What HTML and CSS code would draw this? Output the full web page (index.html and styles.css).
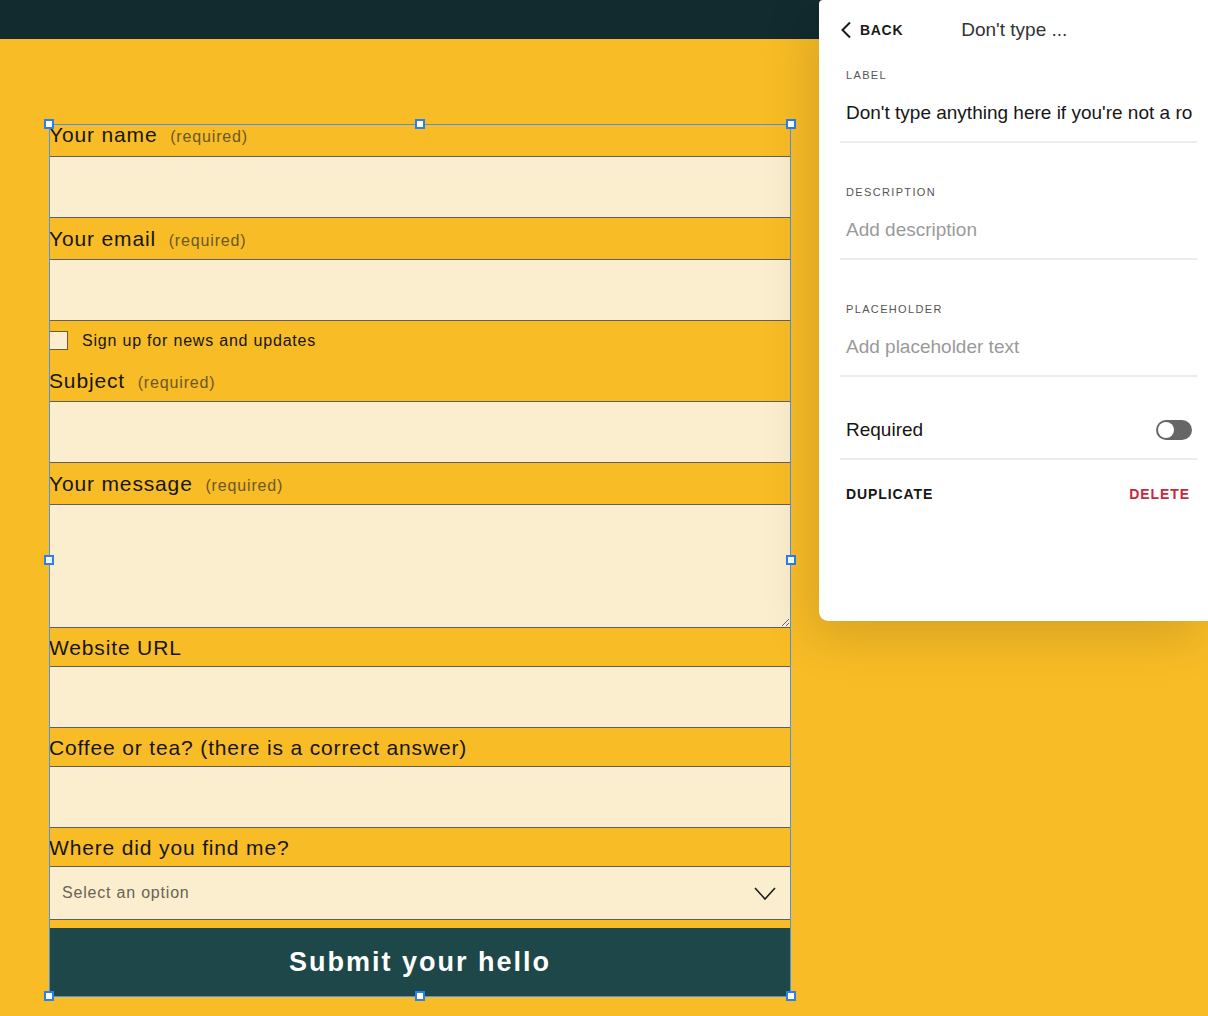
FILE: index.html
```
<!DOCTYPE html>
<html lang="en">
<head>
    <meta charset="UTF-8">
    <meta name="viewport" content="width=device-width, initial-scale=1.0">
    <title>Form Block Editor</title>
    <link rel="stylesheet" href="styles.css">
</head>
<body>
    <div class="topbar"></div>

    <main class="canvas">
        <form class="form-block">
            <div class="field">
                <label class="field-label first">Your name <span class="req">(required)</span></label>
                <input class="text-input" type="text">
            </div>
            <div class="field">
                <label class="field-label">Your email <span class="req">(required)</span></label>
                <input class="text-input" type="email">
            </div>
            <div class="check-row">
                <span class="checkbox"></span>
                <span class="check-text">Sign up for news and updates</span>
            </div>
            <div class="field">
                <label class="field-label">Subject <span class="req">(required)</span></label>
                <input class="text-input" type="text">
            </div>
            <div class="field">
                <label class="field-label">Your message <span class="req">(required)</span></label>
                <textarea class="text-area"></textarea>
            </div>
            <div class="field">
                <label class="field-label plain">Website URL</label>
                <input class="text-input" type="text">
            </div>
            <div class="field">
                <label class="field-label plain">Coffee or tea? (there is a correct answer)</label>
                <input class="text-input" type="text">
            </div>
            <div class="field select-field">
                <label class="field-label plain">Where did you find me?</label>
                <div class="select-box">
                    <span>Select an option</span>
                    <svg width="22" height="13" viewBox="0 0 22 13"><polyline points="1,1 11,12 21,1" fill="none" stroke="#1a1a1a" stroke-width="1.6"/></svg>
                </div>
            </div>
            <button type="button" class="submit">Submit your hello</button>

            <span class="handle tl"></span>
            <span class="handle tc"></span>
            <span class="handle tr"></span>
            <span class="handle ml"></span>
            <span class="handle mr"></span>
            <span class="handle bl"></span>
            <span class="handle bc"></span>
            <span class="handle br"></span>
        </form>
    </main>

    <aside class="panel">
        <div class="panel-head">
            <svg class="back-icon" width="12" height="18" viewBox="0 0 12 18"><polyline points="10,1.5 2.5,9 10,16.5" fill="none" stroke="#1a1a1a" stroke-width="2"/></svg>
            <span class="back">BACK</span>
            <span class="panel-title">Don't type ...</span>
        </div>

        <div class="setting first">
            <div class="caption">LABEL</div>
            <div class="value">Don't type anything here if you're not a robot</div>
        </div>
        <div class="setting">
            <div class="caption">DESCRIPTION</div>
            <div class="value empty">Add description</div>
        </div>
        <div class="setting">
            <div class="caption">PLACEHOLDER</div>
            <div class="value empty">Add placeholder text</div>
        </div>
        <div class="setting toggle-row">
            <span class="value">Required</span>
            <span class="toggle"><span class="knob"></span></span>
        </div>
        <div class="actions">
            <span class="action">DUPLICATE</span>
            <span class="action danger">DELETE</span>
        </div>
    </aside>
</body>
</html>
```

FILE: styles.css
```
body {
    margin: 0;
    background: #f8bc26;
    font-family: "Liberation Sans", Arial, sans-serif;
    color: #1c1c1c;
}
.topbar {
    height: 39px;
    background: #122b2e;
}
.canvas {
    padding: 85px 0 20px 49px;
}

/* form block */
.form-block {
    position: relative;
    width: 742px;
    display: flex;
    flex-direction: column;
}
.form-block::after {
    content: "";
    position: absolute;
    inset: 0 0 -1px 0;
    border: 1px solid #4a92ef;
    pointer-events: none;
}
.field {
    margin-bottom: 10px;
}
.field-label {
    display: block;
    height: 31px;
    line-height: 22px;
    font-size: 21px;
    letter-spacing: 0.85px;
    color: #161616;
}
.field-label.first {
    height: 32px;
}
.field-label.plain {
    height: 28px;
    line-height: 20px;
}
.req {
    margin-left: 6px;
    font-size: 16px;
    color: #6b5827;
}
.text-input, .text-area {
    display: block;
    width: 100%;
    box-sizing: border-box;
    height: 62px;
    margin: 0;
    border: 1px solid #5f5f5f;
    background: #fbeecf;
    font: inherit;
}
.text-area {
    height: 124px;
    resize: vertical;
}
.check-row {
    display: flex;
    align-items: flex-start;
    gap: 14px;
    height: 29px;
    margin-bottom: 10px;
}
.checkbox {
    width: 19px;
    height: 19px;
    box-sizing: border-box;
    border: 1px solid #6e5a28;
    background: #fbeecf;
}
.check-text {
    font-size: 16px;
    line-height: 19px;
    letter-spacing: 0.8px;
    color: #161616;
}
.select-field {
    margin-bottom: 8px;
}
.select-box {
    height: 54px;
    box-sizing: border-box;
    border: 1px solid #5f5f5f;
    background: #fbeecf;
    display: flex;
    align-items: center;
    justify-content: space-between;
    padding: 0 14px 0 12px;
    font-size: 16px;
    letter-spacing: 0.8px;
    color: #6a6252;
}
.submit {
    display: block;
    width: 100%;
    height: 68px;
    border: none;
    background: #1d4748;
    color: #fff;
    font-family: "Liberation Sans", Arial, sans-serif;
    font-weight: bold;
    font-size: 27px;
    letter-spacing: 2px;
    cursor: pointer;
}

/* selection handles */
.handle {
    position: absolute;
    width: 10px;
    height: 10px;
    box-sizing: border-box;
    border: 2px solid #2b80f0;
    background: #fff;
    transform: translate(-50%, -50%);
    z-index: 2;
}
.tl, .tc, .tr { top: 0; }
.ml, .mr { top: 50%; }
.bl, .bc, .br { top: 100%; }
.tl, .ml, .bl { left: 0; }
.tc, .bc { left: 50%; }
.tr, .mr, .br { left: 100%; }

/* settings panel */
.panel {
    position: absolute;
    top: 0;
    right: 0;
    width: 389px;
    height: 621px;
    box-sizing: border-box;
    padding: 0 11px 0 21px;
    background: #fff;
    border-radius: 4px 0 0 9px;
    box-shadow: -8px 16px 50px rgba(0, 0, 0, 0.14);
    z-index: 5;
}
.panel-head {
    height: 60px;
    display: flex;
    align-items: center;
}
.back-icon {
    margin-right: 8px;
}
.back {
    font-size: 14px;
    font-weight: bold;
    letter-spacing: 0.7px;
    color: #1a1a1a;
}
.panel-title {
    margin-left: 58px;
    font-size: 19px;
    color: #333;
}
.setting {
    padding: 42px 5px 16px 6px;
    border-bottom: 2px solid #ececec;
}
.setting.first {
    padding-top: 8px;
}
.caption {
    font-size: 11px;
    line-height: 14px;
    letter-spacing: 1.35px;
    color: #555;
    margin-bottom: 19px;
}
.value {
    font-size: 19px;
    line-height: 24px;
    color: #161616;
    white-space: nowrap;
    overflow: hidden;
}
.value.empty {
    color: #9a9a9a;
}
.toggle-row {
    display: flex;
    align-items: center;
    justify-content: space-between;
    padding-top: 41px;
}
.toggle {
    position: relative;
    width: 36px;
    height: 20px;
    border-radius: 10px;
    background: #666;
}
.knob {
    position: absolute;
    left: 2px;
    top: 2px;
    width: 16px;
    height: 16px;
    border-radius: 50%;
    background: #fff;
}
.actions {
    display: flex;
    justify-content: space-between;
    padding: 26px 7px 0 6px;
}
.action {
    font-size: 14px;
    line-height: 16px;
    font-weight: bold;
    letter-spacing: 0.9px;
    color: #161616;
}
.action.danger {
    color: #c8283a;
}
```
